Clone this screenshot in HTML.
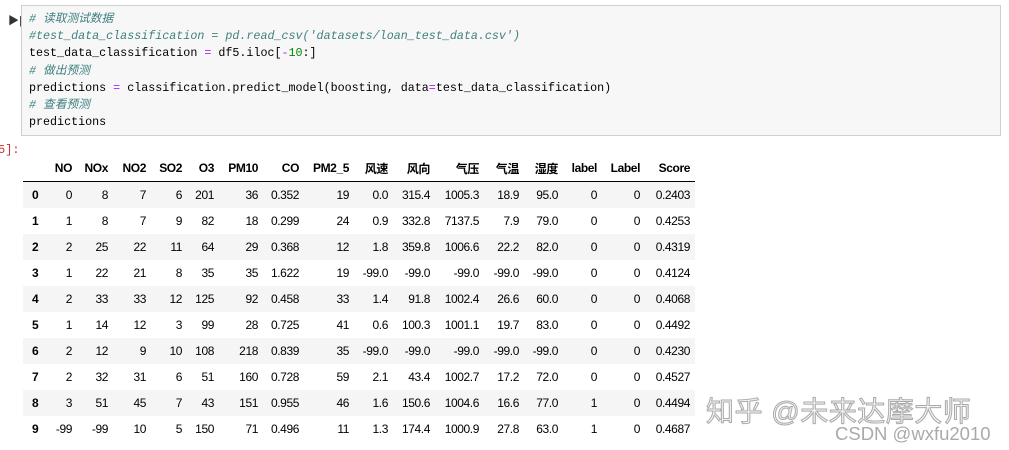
<!DOCTYPE html>
<html><head><meta charset="utf-8"><style>
body{margin:0;width:1009px;height:450px;background:#fff;position:relative;overflow:hidden;font-family:"Liberation Sans","Noto Sans CJK SC",sans-serif}
.code{position:absolute;left:21px;top:5px;width:980px;height:131px;background:#f7f7f7;border:1px solid #cfcfcf;box-sizing:border-box}
.code pre{margin:0;position:absolute;left:7px;top:5px;font-family:"Liberation Mono","Noto Sans CJK SC",monospace;font-size:11.7px;line-height:17.2px;color:#000}
.c{color:#408080;font-style:italic}
.o{color:#aa22ff}.n{color:#080}
.run{position:absolute;left:8px;top:12px;font-size:11px;color:#333}
.prompt{position:absolute;left:-2px;top:143px;font-family:"Liberation Mono",monospace;font-size:12px;color:#c33}
table{position:absolute;left:23px;top:155px;border-collapse:collapse;font-size:12px;color:#000;letter-spacing:-0.4px}
td,th{padding:0 5px 0 0;text-align:right;height:26px;white-space:nowrap}
th{font-weight:bold;height:26px}
thead tr{border-bottom:1px solid #000}
tbody tr:nth-child(odd){background:#f5f5f5}
tbody th{text-align:left;padding-left:9px}
.wm{position:absolute;left:706px;top:390px;font-size:28px;color:#f4f4f4;-webkit-text-stroke:1px #aaa;letter-spacing:0.5px}
.cs{position:absolute;left:835px;top:423px;font-size:18.5px;color:#aaa}
</style></head><body>
<div class="run">▶|</div>
<div class="code"><pre><span class="c"># 读取测试数据</span>
<span class="c">#test_data_classification = pd.read_csv('datasets/loan_test_data.csv')</span>
test_data_classification <span class="o">=</span> df5.iloc[<span class="o">-</span><span class="n">10</span>:]
<span class="c"># 做出预测</span>
predictions <span class="o">=</span> classification.predict_model(boosting, data<span class="o">=</span>test_data_classification)
<span class="c"># 查看预测</span>
predictions</pre></div>
<div class="prompt">5]:</div>
<table>
<colgroup><col style="width:29px"><col style="width:25px"><col style="width:36px"><col style="width:38px"><col style="width:36px"><col style="width:32px"><col style="width:44px"><col style="width:41px"><col style="width:50px"><col style="width:39px"><col style="width:42px"><col style="width:49px"><col style="width:40px"><col style="width:39px"><col style="width:39px"><col style="width:43px"><col style="width:50px"></colgroup>
<thead><tr><th></th><th>NO</th><th>NOx</th><th>NO2</th><th>SO2</th><th>O3</th><th>PM10</th><th>CO</th><th>PM2_5</th><th>风速</th><th>风向</th><th>气压</th><th>气温</th><th>湿度</th><th>label</th><th>Label</th><th>Score</th></tr></thead>
<tbody>
<tr><th>0</th><td>0</td><td>8</td><td>7</td><td>6</td><td>201</td><td>36</td><td>0.352</td><td>19</td><td>0.0</td><td>315.4</td><td>1005.3</td><td>18.9</td><td>95.0</td><td>0</td><td>0</td><td>0.2403</td></tr>
<tr><th>1</th><td>1</td><td>8</td><td>7</td><td>9</td><td>82</td><td>18</td><td>0.299</td><td>24</td><td>0.9</td><td>332.8</td><td>7137.5</td><td>7.9</td><td>79.0</td><td>0</td><td>0</td><td>0.4253</td></tr>
<tr><th>2</th><td>2</td><td>25</td><td>22</td><td>11</td><td>64</td><td>29</td><td>0.368</td><td>12</td><td>1.8</td><td>359.8</td><td>1006.6</td><td>22.2</td><td>82.0</td><td>0</td><td>0</td><td>0.4319</td></tr>
<tr><th>3</th><td>1</td><td>22</td><td>21</td><td>8</td><td>35</td><td>35</td><td>1.622</td><td>19</td><td>-99.0</td><td>-99.0</td><td>-99.0</td><td>-99.0</td><td>-99.0</td><td>0</td><td>0</td><td>0.4124</td></tr>
<tr><th>4</th><td>2</td><td>33</td><td>33</td><td>12</td><td>125</td><td>92</td><td>0.458</td><td>33</td><td>1.4</td><td>91.8</td><td>1002.4</td><td>26.6</td><td>60.0</td><td>0</td><td>0</td><td>0.4068</td></tr>
<tr><th>5</th><td>1</td><td>14</td><td>12</td><td>3</td><td>99</td><td>28</td><td>0.725</td><td>41</td><td>0.6</td><td>100.3</td><td>1001.1</td><td>19.7</td><td>83.0</td><td>0</td><td>0</td><td>0.4492</td></tr>
<tr><th>6</th><td>2</td><td>12</td><td>9</td><td>10</td><td>108</td><td>218</td><td>0.839</td><td>35</td><td>-99.0</td><td>-99.0</td><td>-99.0</td><td>-99.0</td><td>-99.0</td><td>0</td><td>0</td><td>0.4230</td></tr>
<tr><th>7</th><td>2</td><td>32</td><td>31</td><td>6</td><td>51</td><td>160</td><td>0.728</td><td>59</td><td>2.1</td><td>43.4</td><td>1002.7</td><td>17.2</td><td>72.0</td><td>0</td><td>0</td><td>0.4527</td></tr>
<tr><th>8</th><td>3</td><td>51</td><td>45</td><td>7</td><td>43</td><td>151</td><td>0.955</td><td>46</td><td>1.6</td><td>150.6</td><td>1004.6</td><td>16.6</td><td>77.0</td><td>1</td><td>0</td><td>0.4494</td></tr>
<tr><th>9</th><td>-99</td><td>-99</td><td>10</td><td>5</td><td>150</td><td>71</td><td>0.496</td><td>11</td><td>1.3</td><td>174.4</td><td>1000.9</td><td>27.8</td><td>63.0</td><td>1</td><td>0</td><td>0.4687</td></tr>
</tbody></table>
<div class="wm">知乎 @未来达摩大师</div>
<div class="cs">CSDN @wxfu2010</div>
</body></html>
